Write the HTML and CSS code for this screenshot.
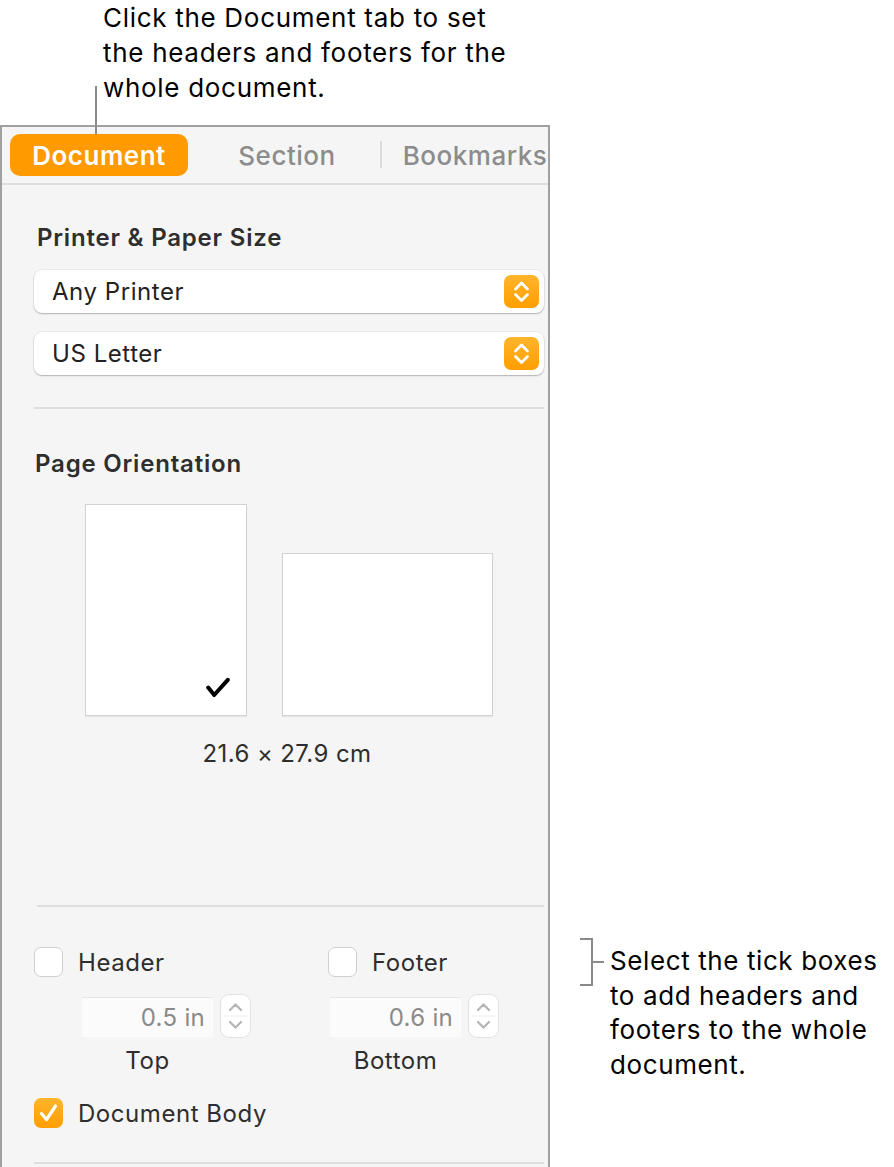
FILE: index.html
```html
<!DOCTYPE html>
<html lang="en">
<head>
  <meta charset="UTF-8">
  <title>Document setup</title>
  <meta name="viewport" content="width=device-width, initial-scale=1.0">
  <link rel="stylesheet" href="styles.css">
</head>
<body>
  <div class="page">
    <div class="main">
      <p class="callout-top">Click the Document tab to set<br>the headers and footers for the<br>whole document.</p>
      <div class="leader"></div>

      <div class="panel">
        <div class="tabs">
          <div class="tab active">Document</div>
          <div class="tab">Section</div>
          <div class="tab divided">Bookmarks</div>
        </div>

        <div class="content">
          <h3 class="group-title">Printer &amp; Paper Size</h3>
          <div class="select">
            <span>Any Printer</span>
            <span class="popup-arrows">
              <svg width="35" height="33" viewBox="0 0 35 33"><path d="M11.5 14l6-6 6 6M11.5 19.5l6 6 6-6" fill="none" stroke="#fff" stroke-width="2.8" stroke-linecap="round" stroke-linejoin="round"/></svg>
            </span>
          </div>
          <div class="select">
            <span>US Letter</span>
            <span class="popup-arrows">
              <svg width="35" height="33" viewBox="0 0 35 33"><path d="M11.5 14l6-6 6 6M11.5 19.5l6 6 6-6" fill="none" stroke="#fff" stroke-width="2.8" stroke-linecap="round" stroke-linejoin="round"/></svg>
            </span>
          </div>

          <div class="rule rule-1"></div>

          <h3 class="group-title orient-title">Page Orientation</h3>
          <div class="orientations">
            <div class="sheet portrait">
              <svg width="24" height="21" viewBox="0 0 24 21"><path d="M2.2 10.5l6 7.5L21.8 2.8" fill="none" stroke="#000" stroke-width="4" stroke-linecap="round" stroke-linejoin="round"/></svg>
            </div>
            <div class="sheet landscape"></div>
          </div>
          <div class="dimensions">21.6 × 27.9 cm</div>

          <div class="rule rule-2"></div>

          <div class="hf-row checks">
            <label class="check"><span class="box"></span>Header</label>
            <label class="check"><span class="box"></span>Footer</label>
          </div>
          <div class="hf-row fields">
            <div class="field first">
              <div class="input">0.5 in</div>
              <div class="spin">
                <svg width="29" height="42" viewBox="0 0 29 42"><path d="M9 15l5.5-5.5L20 15M9 27l5.5 5.5L20 27" fill="none" stroke="#b4b4b4" stroke-width="2.2" stroke-linecap="round" stroke-linejoin="round"/><path d="M2 21h25" stroke="#ececec" stroke-width="1"/></svg>
              </div>
              <div class="field-label">Top</div>
            </div>
            <div class="field second">
              <div class="input">0.6 in</div>
              <div class="spin">
                <svg width="29" height="42" viewBox="0 0 29 42"><path d="M9 15l5.5-5.5L20 15M9 27l5.5 5.5L20 27" fill="none" stroke="#b4b4b4" stroke-width="2.2" stroke-linecap="round" stroke-linejoin="round"/><path d="M2 21h25" stroke="#ececec" stroke-width="1"/></svg>
              </div>
              <div class="field-label">Bottom</div>
            </div>
          </div>

          <label class="check body-check">
            <span class="box checked">
              <svg width="29" height="29" viewBox="0 0 29 29"><path d="M7.5 15.5l5 6L21.5 8" fill="none" stroke="#fff" stroke-width="3.2" stroke-linecap="round" stroke-linejoin="round"/></svg>
            </span>Document Body
          </label>

          <div class="rule rule-3"></div>
        </div>
      </div>
    </div>

    <div class="side-note">
      <div class="bracket"></div>
      <p>Select the tick boxes<br>to add headers and<br>footers to the whole<br>document.</p>
    </div>
  </div>
</body>
</html>
```

FILE: styles.css
```css
body {
  margin: 0;
  font-family: "Inter", "Roboto", sans-serif;
  background-color: #ffffff;
  color: #000000;
}

.page {
  display: flex;
  height: 1167px;
  overflow: hidden;
}

.main {
  position: relative;
  width: 550px;
  display: flex;
  flex-direction: column;
  flex-shrink: 0;
}

.callout-top {
  margin: 0;
  height: 125px;
  padding-left: 103px;
  font-size: 26px;
  line-height: 35px;
  letter-spacing: 0.7px;
  color: #000;
  white-space: nowrap;
}

/* pointer from the note down to the tab */
.leader {
  position: absolute;
  left: 95px;
  top: 86px;
  width: 2px;
  height: 48px;
  background-color: #8a8a8a;
}

.panel {
  flex: 1;
  box-sizing: border-box;
  border: 2px solid #a0a0a0;
  border-bottom: none;
  background-color: #f5f5f5;
}

.tabs {
  display: grid;
  grid-template-columns: repeat(3, 188px);
  padding: 7px 0 7px 3px;
  border-bottom: 2px solid #dedede;
}

.tab {
  position: relative;
  height: 42px;
  display: flex;
  align-items: center;
  justify-content: center;
  font-size: 26px;
  font-weight: 500;
  letter-spacing: 0.5px;
  color: #8c8c8c;
  white-space: nowrap;
}

.tab.active {
  margin: 0 5px;
  border-radius: 10px;
  background-color: #ff9a00;
  color: #ffffff;
  font-weight: 600;
}

.tab.divided::before {
  content: "";
  position: absolute;
  left: -1px;
  top: 7px;
  bottom: 8px;
  width: 2px;
  background-color: #dcdcdc;
}

.content {
  padding: 0 4px 0 32px;
  font-size: 24px;
  letter-spacing: 0.55px;
  color: #2e2e2e;
}

.group-title {
  margin: 39px 0 18px 3px;
  font-size: 24px;
  line-height: 28px;
  font-weight: 600;
  letter-spacing: 0.8px;
  color: #2e2e2e;
}

.select {
  height: 43px;
  display: flex;
  align-items: center;
  justify-content: space-between;
  padding: 0 5px 0 18px;
  border-radius: 8px;
  background-color: #ffffff;
  box-shadow: 0 1px 1.5px rgba(0,0,0,0.25), 0 0 0 0.5px rgba(0,0,0,0.08);
  color: #222;
}

.select + .select {
  margin-top: 19px;
}

.popup-arrows {
  display: flex;
  width: 35px;
  height: 33px;
  border-radius: 7px;
  background: linear-gradient(#ffb52c, #ff9e00);
}

.rule {
  height: 2px;
  background-color: #dedede;
}

.rule-1 {
  margin-top: 32px;
}

.orient-title {
  margin: 41px 0 26px 1px;
}

.orientations {
  display: flex;
  justify-content: center;
  align-items: flex-end;
  gap: 35px;
}

.sheet {
  box-sizing: border-box;
  background-color: #ffffff;
  border: 1px solid #d2d2d2;
  box-shadow: 0 1px 1px rgba(0,0,0,0.06);
}

.sheet.portrait {
  width: 162px;
  height: 212px;
  display: flex;
  align-items: flex-end;
  justify-content: flex-end;
  padding: 0 16px 17px 0;
}

.sheet.landscape {
  width: 211px;
  height: 163px;
}

.dimensions {
  margin: 24px 0 0 -4px;
  text-align: center;
  line-height: 28px;
  letter-spacing: 0.4px;
}

.rule-2 {
  margin: 137px 0 0 3px;
}

.hf-row {
  display: grid;
  grid-template-columns: 294px 1fr;
}

.checks {
  margin-top: 40px;
}

.check {
  display: flex;
  align-items: center;
  gap: 15px;
  line-height: 29px;
}

.box {
  display: flex;
  width: 29px;
  height: 30px;
  box-sizing: border-box;
  border-radius: 7px;
  border: 1px solid #cfcfcf;
  background-color: #ffffff;
}

.box.checked {
  border: none;
  background: linear-gradient(#ffb52c, #ff9e00);
}

.fields {
  margin-top: 18px;
}

.field {
  display: grid;
  grid-template-columns: 131px 29px;
  column-gap: 8px;
  row-gap: 10px;
}

.field.first {
  margin-left: 48px;
}

.field.second {
  margin-left: 2px;
}

.input {
  align-self: end;
  height: 40px;
  box-sizing: border-box;
  padding-right: 8px;
  border-top: 1px solid #e6e6e6;
  background-color: #fbfbfb;
  text-align: right;
  line-height: 40px;
  letter-spacing: 0.3px;
  color: #8a8a8a;
}

.spin {
  display: flex;
  height: 42px;
  border-radius: 8px;
  background-color: #ffffff;
  box-shadow: 0 0 0 1px #e2e2e2;
}

.field-label {
  grid-column: 1;
  text-align: center;
  line-height: 28px;
}

.body-check {
  margin-top: 23px;
}

.rule-3 {
  margin-top: 34px;
}

.side-note {
  display: flex;
  align-items: flex-start;
  padding: 938px 0 0 30px;
}

.bracket {
  position: relative;
  width: 11px;
  height: 44px;
  border: 2px solid #8a8a8a;
  border-left: none;
}

.bracket::after {
  content: "";
  position: absolute;
  left: 11px;
  top: 21px;
  width: 13px;
  height: 2px;
  background-color: #8a8a8a;
}

.side-note p {
  margin: 6px 0 0 17px;
  font-size: 26px;
  line-height: 34.7px;
  letter-spacing: 0.6px;
  color: #000;
  white-space: nowrap;
}
```
